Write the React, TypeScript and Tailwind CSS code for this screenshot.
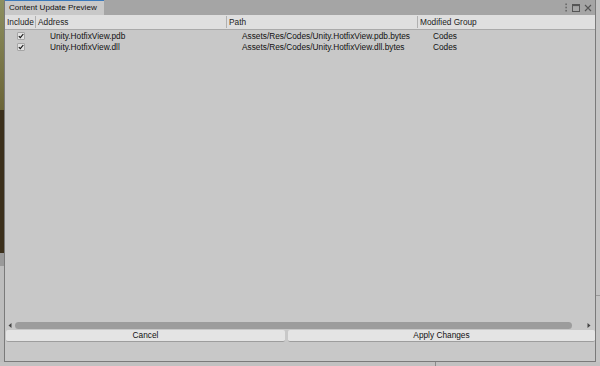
import React from "react";

const font = { fontFamily: "'Liberation Sans', Arial, sans-serif" };

function Check() {
  return (
    <div className="w-[8px] h-[8px] bg-[#e2e2e2] border border-[#a5a5a5] rounded-[1px] flex items-center justify-center">
      <svg width="6" height="6" viewBox="0 0 6 6">
        <path d="M0.8 3.2 L2.3 4.7 L5.3 1" stroke="#111" strokeWidth="1.1" fill="none" />
      </svg>
    </div>
  );
}

const rows = [
  { a: "Unity.HotfixView.pdb", p: "Assets/Res/Codes/Unity.HotfixView.pdb.bytes", g: "Codes" },
  { a: "Unity.HotfixView.dll", p: "Assets/Res/Codes/Unity.HotfixView.dll.bytes", g: "Codes" },
];

export default function App() {
  return (
    <div className="w-[600px] h-[366px] flex flex-col bg-[#c1c1c1] overflow-hidden text-[8.3px] text-[#111] whitespace-nowrap" style={font}>
      <div className="flex h-[362px]">
        {/* left background strip */}
        <div className="w-[4px] flex flex-col">
          <div className="h-[110px] bg-gradient-to-b from-[#8d9060] to-[#6b6437]" />
          <div className="h-[143px] bg-[#3c301c]" />
          <div className="h-[13px] bg-[#9a9a9a]" />
          <div className="flex-1 bg-[#bdbdbd]" />
        </div>
        {/* window */}
        <div className="w-[592px] flex flex-col border-l border-r border-b border-[#7a7a7a] bg-[#c8c8c8]">
          {/* title bar */}
          <div className="h-[15px] bg-[#a5a5a5] flex items-stretch">
            <div className="w-[99px] bg-[#c8c8c8] border-t-[1.5px] border-[#3a79bb] flex items-center pl-[4px] text-[8.1px] text-[#111]">
              Content Update Preview
            </div>
            <div className="flex-1" />
            <div className="flex items-center gap-[4px] pr-[3px] text-[#444]">
              <svg width="4" height="9" viewBox="0 0 4 9">
                <rect x="1.5" y="0.5" width="1.2" height="1.6" fill="#555" />
                <rect x="1.5" y="3.7" width="1.2" height="1.6" fill="#555" />
                <rect x="1.5" y="6.9" width="1.2" height="1.6" fill="#555" />
              </svg>
              <svg width="8" height="8" viewBox="0 0 8 8">
                <rect x="0.5" y="0.5" width="7" height="7" fill="none" stroke="#555" strokeWidth="1" />
                <rect x="0.5" y="0.5" width="7" height="1.6" fill="#555" />
              </svg>
              <svg width="8" height="8" viewBox="0 0 8 8">
                <path d="M1 1 L7 7 M7 1 L1 7" stroke="#555" strokeWidth="1.1" />
              </svg>
            </div>
          </div>
          {/* header */}
          <div className="h-[15px] bg-[#dfdfdf] border-b border-[#a9a9a9] flex items-center text-[#222]">
            <div className="w-[31px] pl-[2px] border-r border-[#b0b0b0] h-[12px] flex items-center">Include</div>
            <div className="w-[191px] pl-[2px] border-r border-[#b0b0b0] h-[12px] flex items-center">Address</div>
            <div className="w-[191px] pl-[2px] border-r border-[#b0b0b0] h-[12px] flex items-center">Path</div>
            <div className="flex-1 pl-[2px] h-[12px] flex items-center">Modified Group</div>
          </div>
          {/* rows */}
          <div className="flex-1 flex flex-col pt-[1px]">
            {rows.map((r) => (
              <div key={r.a} className="h-[10.5px] flex items-center">
                <div className="w-[31px] flex justify-center pl-[1px]">
                  <Check />
                </div>
                <div className="w-[191px] pl-[14px]">{r.a}</div>
                <div className="w-[191px] pl-[15px]">{r.p}</div>
                <div className="flex-1 pl-[15px]">{r.g}</div>
              </div>
            ))}
          </div>
          {/* scrollbar */}
          <div className="h-[8px] flex items-center mb-[1px]">
            <div className="w-[10px] flex justify-center">
              <svg width="4" height="5" viewBox="0 0 4 5"><path d="M3.5 0 L0.5 2.5 L3.5 5 Z" fill="#444" /></svg>
            </div>
            <div className="w-[557px] h-[7px] rounded-full bg-[#9c9c9c]" />
            <div className="flex-1 flex justify-end pr-[4px]">
              <svg width="4" height="5" viewBox="0 0 4 5"><path d="M0.5 0 L3.5 2.5 L0.5 5 Z" fill="#444" /></svg>
            </div>
          </div>
          {/* buttons */}
          <div className="h-[12px] flex gap-[3px] pl-[1px] pr-[0px]">
            <div className="w-[279px] bg-[#e4e4e4] border-b border-[#9d9d9d] rounded-[2px] flex items-center justify-center text-[#111]">
              Cancel
            </div>
            <div className="flex-1 bg-[#e4e4e4] border-b border-[#9d9d9d] rounded-[2px] flex items-center justify-center text-[#111]">
              Apply Changes
            </div>
          </div>
          <div className="h-[19px]" />
        </div>
        {/* right strip */}
        <div className="w-[4px] flex flex-col">
          <div className="h-[295px] bg-[#c4c4c4]" />
          <div className="h-[1px] bg-[#9a9a9a]" />
          <div className="flex-1 bg-[#c4c4c4]" />
        </div>
      </div>
      <div className="flex-1 flex">
        <div className="w-[435px]" />
        <div className="w-[1px] bg-[#8a8a8a]" />
      </div>
    </div>
  );
}
